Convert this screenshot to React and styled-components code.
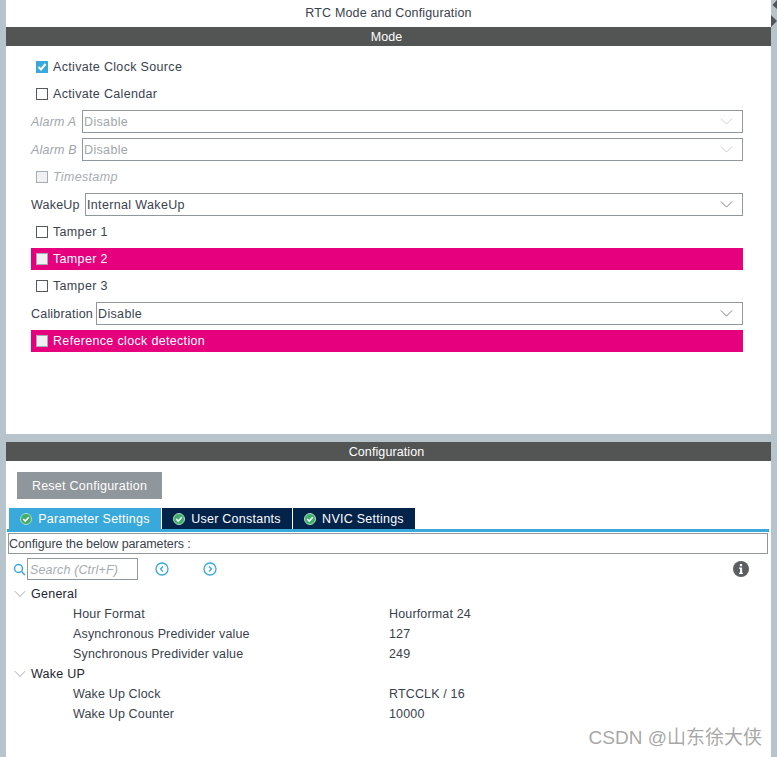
import React from 'react';
import styled, { createGlobalStyle } from 'styled-components';

const GlobalStyle = createGlobalStyle`
  html, body {
    margin: 0;
    padding: 0;
    background: #b7c4cb;
  }
  body {
    font-family: 'Liberation Sans', Arial, sans-serif;
    font-size: 12.5px;
    color: #39424e;
  }
`;

const Page = styled.div`
  position: relative;
  width: 777px;
  height: 757px;
  overflow: hidden;
  padding: 0 6px;
  box-sizing: border-box;
`;

const Title = styled.div`
  height: 27px;
  background: #fff;
  line-height: 26px;
  text-align: center;
  letter-spacing: 0.15px;
`;

const Header = styled.div`
  height: 19px;
  line-height: 20px;
  background: #525554;
  color: #fff;
  text-align: center;
  padding-right: 4px;
  letter-spacing: 0.1px;
`;

const ModePanel = styled.div`
  height: 388px;
  background: #fff;
  box-sizing: border-box;
  padding: 10px 28px 0 25px;
  margin-bottom: 8px;
  display: flex;
  flex-direction: column;
  gap: 5px;
`;

const Row = styled.div`
  min-height: 22px;
  display: flex;
  align-items: center;
  flex-shrink: 0;
  padding-left: ${(p) => (p.$check ? '5px' : '0')};
  background: ${(p) => (p.$alert ? '#e6007e' : 'transparent')};
  color: ${(p) => (p.$alert ? '#fff' : '#39424e')};
`;

const Box = styled.span`
  width: 12px;
  height: 12px;
  box-sizing: border-box;
  margin-right: 5px;
  flex-shrink: 0;
  display: flex;
  align-items: center;
  justify-content: center;
  border: 1px solid ${(p) => (p.$checked ? '#39a9dc' : p.$muted ? '#a5acb1' : '#55595c')};
  background: ${(p) => (p.$checked ? '#39a9dc' : p.$muted ? '#f0f1f2' : '#fff')};
`;

const CheckLabel = styled.span`
  letter-spacing: 0.33px;
  font-style: ${(p) => (p.$muted ? 'italic' : 'normal')};
  color: ${(p) => (p.$muted ? '#a5acb1' : 'inherit')};
`;

const SelectLabel = styled.span`
  width: ${(p) => p.$width}px;
  flex-shrink: 0;
  white-space: nowrap;
  letter-spacing: 0.2px;
  font-style: ${(p) => (p.$muted ? 'italic' : 'normal')};
  color: ${(p) => (p.$muted ? '#9fa6ab' : 'inherit')};
`;

const Select = styled.div`
  flex: 1;
  height: 23px;
  box-sizing: border-box;
  border: 1px solid #90989e;
  padding: 0 9px 0 1px;
  display: flex;
  align-items: center;
  justify-content: space-between;
  letter-spacing: 0.35px;
  color: ${(p) => (p.$muted ? '#9fa6ab' : '#39424e')};
`;

const Config = styled.div`
  height: 296px;
  background: #fff;
  padding-top: 11px;
  box-sizing: border-box;
`;

const ResetButton = styled.div`
  width: 145px;
  height: 27px;
  margin-left: 11px;
  background: #8f969c;
  color: #fff;
  line-height: 28px;
  text-align: center;
  letter-spacing: 0.25px;
`;

const Tabs = styled.div`
  display: flex;
  gap: 1px;
  margin: 9px 2px 0 1px;
  padding-left: 2px;
  border-bottom: 3px solid #39a9dc;
  height: 21px;
`;

const Tab = styled.div`
  width: ${(p) => p.$width}px;
  display: flex;
  align-items: center;
  justify-content: center;
  gap: 6px;
  background: ${(p) => (p.$active ? '#39a9dc' : '#03234b')};
  color: #fff;
  letter-spacing: 0.25px;
`;

const ParamsNote = styled.div`
  height: 21px;
  margin: 1px 3px 0 2px;
  box-sizing: border-box;
  border: 1px solid #90989e;
  line-height: 20px;
  letter-spacing: -0.1px;
`;

const SearchBar = styled.div`
  display: flex;
  align-items: center;
  height: 22px;
  margin-top: 4px;
  padding-left: 7px;
`;

const SearchBox = styled.div`
  width: 111px;
  height: 22px;
  box-sizing: border-box;
  border: 1px solid #90989e;
  margin-left: 1px;
  padding-left: 2px;
  line-height: 22px;
  font-style: italic;
  color: #a5acb1;
  letter-spacing: 0.15px;
`;

const NavIcon = styled.svg`
  margin-left: ${(p) => p.$gap}px;
  flex-shrink: 0;
`;

const InfoIcon = styled.svg`
  margin-left: auto;
  margin-right: 22px;
`;

const Tree = styled.div`
  margin-top: 4px;
`;

const GroupRow = styled.div`
  height: 20px;
  display: flex;
  align-items: center;
  padding-left: 8px;
  gap: 5px;
  color: #1c2530;
  letter-spacing: 0.25px;
`;

const ParamRow = styled.div`
  height: 20px;
  display: grid;
  grid-template-columns: 316px 1fr;
  align-items: center;
  padding-left: 67px;
  letter-spacing: 0.15px;
`;

const Watermark = styled.div`
  position: absolute;
  right: 15px;
  bottom: 7px;
  font-family: 'Liberation Sans', 'Noto Sans CJK SC', sans-serif;
  font-size: 19px;
  line-height: 24px;
  color: rgba(90, 90, 90, 0.55);
`;

const Arrows = styled.svg`
  position: absolute;
  top: 0;
  right: 0;
`;

const Chevron = ({ color = '#90989e', size = 15 }) => (
  <svg width={size} height={size} viewBox="0 0 15 15" fill="none" stroke={color} strokeWidth="1">
    <path d="M1 4l6.5 6.5L14 4" />
  </svg>
);

const Check = () => (
  <svg width="10" height="10" viewBox="0 0 10 10" fill="none" stroke="#fff" strokeWidth="2">
    <path d="M1.5 5l2.5 2.5L8.5 2" />
  </svg>
);

const TabCheck = () => (
  <svg width="12" height="12" viewBox="0 0 12 12">
    <circle cx="6" cy="6" r="5.5" fill="#3fae6b" stroke="#a9dcc0" strokeWidth="1" />
    <path d="M3.2 6l2 2 3.6-3.7" fill="none" stroke="#fff" strokeWidth="1.6" />
  </svg>
);

const CheckRow = ({ label, checked, muted, alert }) => (
  <Row $check $alert={alert}>
    <Box $checked={checked} $muted={muted || alert}>{checked && <Check />}</Box>
    <CheckLabel $muted={muted}>{label}</CheckLabel>
  </Row>
);

const SelectRow = ({ label, value, muted, labelWidth }) => (
  <Row>
    <SelectLabel $muted={muted} $width={labelWidth}>{label}</SelectLabel>
    <Select $muted={muted}>
      {value}
      <Chevron color={muted ? '#c5cacd' : '#6d7479'} size={13} />
    </Select>
  </Row>
);

const params = [
  { group: 'General', items: [['Hour Format', 'Hourformat 24'], ['Asynchronous Predivider value', '127'], ['Synchronous Predivider value', '249']] },
  { group: 'Wake UP', items: [['Wake Up Clock', 'RTCCLK / 16'], ['Wake Up Counter', '10000']] },
];

const App = () => (
  <Page>
    <GlobalStyle />
    <Title>RTC Mode and Configuration</Title>
    <Header>Mode</Header>
    <ModePanel>
      <CheckRow label="Activate Clock Source" checked />
      <CheckRow label="Activate Calendar" />
      <SelectRow label="Alarm A" value="Disable" muted labelWidth={51} />
      <SelectRow label="Alarm B" value="Disable" muted labelWidth={51} />
      <CheckRow label="Timestamp" muted />
      <SelectRow label="WakeUp" value="Internal WakeUp" labelWidth={54} />
      <CheckRow label="Tamper 1" />
      <CheckRow label="Tamper 2" alert />
      <CheckRow label="Tamper 3" />
      <SelectRow label="Calibration" value="Disable" labelWidth={65} />
      <CheckRow label="Reference clock detection" alert />
    </ModePanel>
    <Header>Configuration</Header>
    <Config>
      <ResetButton>Reset Configuration</ResetButton>
      <Tabs>
        <Tab $active $width={152}><TabCheck />Parameter Settings</Tab>
        <Tab $width={130}><TabCheck />User Constants</Tab>
        <Tab $width={122}><TabCheck />NVIC Settings</Tab>
      </Tabs>
      <ParamsNote>Configure the below parameters :</ParamsNote>
      <SearchBar>
        <svg width="13" height="13" viewBox="0 0 13 13" fill="none" stroke="#39a9dc" strokeWidth="1.5">
          <circle cx="5.5" cy="5.5" r="4" />
          <path d="M8.5 8.5l3.5 3.5" />
        </svg>
        <SearchBox>Search (Ctrl+F)</SearchBox>
        <NavIcon $gap={17} width="14" height="14" viewBox="0 0 14 14" fill="none" stroke="#39a9dc" strokeWidth="1.3">
          <circle cx="7" cy="7" r="6" />
          <path d="M8 4.5L5.5 7 8 9.5" />
        </NavIcon>
        <NavIcon $gap={34} width="14" height="14" viewBox="0 0 14 14" fill="none" stroke="#39a9dc" strokeWidth="1.3">
          <circle cx="7" cy="7" r="6" />
          <path d="M6 4.5L8.5 7 6 9.5" />
        </NavIcon>
        <InfoIcon width="16" height="16" viewBox="0 0 16 16">
          <circle cx="8" cy="8" r="8" fill="#5b5f62" />
          <rect x="6.9" y="3" width="2.2" height="2.2" fill="#fff" />
          <path d="M6 6.5h3.1v5.2H10v1.3H6v-1.3h1V7.8H6z" fill="#fff" />
        </InfoIcon>
      </SearchBar>
      <Tree>
        {params.map((g) => (
          <React.Fragment key={g.group}>
            <GroupRow>
              <Chevron size={12} />
              {g.group}
            </GroupRow>
            {g.items.map(([name, value]) => (
              <ParamRow key={name}>
                <span>{name}</span>
                <span>{value}</span>
              </ParamRow>
            ))}
          </React.Fragment>
        ))}
      </Tree>
    </Config>
    <Arrows width="6" height="30" viewBox="0 0 6 30">
      <path d="M6 0v9L1.5 5z M0 15l6 6-6 6z" fill="#525554" />
    </Arrows>
    <Watermark>CSDN @山东徐大侠</Watermark>
  </Page>
);

export default App;
